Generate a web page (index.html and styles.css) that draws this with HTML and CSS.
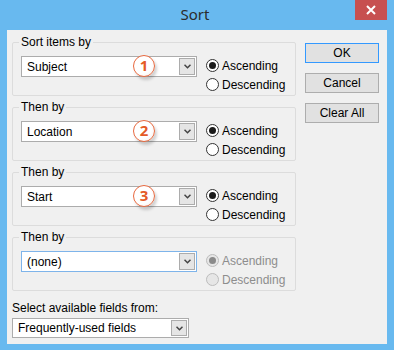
FILE: index.html
```html
<!DOCTYPE html>
<html lang="en">
<head>
    <meta charset="UTF-8">
    <title>Sort</title>
    <link rel="stylesheet" href="styles.css">
</head>
<body>
    <div class="window">
        <div class="titlebar">
            <span class="title">Sort</span>
            <button class="close-btn">
                <svg width="10" height="10" viewBox="0 0 10 10"><path d="M1 1 L9 9 M9 1 L1 9" stroke="#fff" stroke-width="2"/></svg>
            </button>
        </div>

        <div class="client">
            <div class="main">
                <fieldset class="group">
                    <legend>Sort items by</legend>
                    <div class="row">
                        <div class="combo">
                            <span class="combo-text">Subject</span>
                            <span class="drop"><svg width="7" height="5" viewBox="0 0 7 5"><path d="M0.5 0.8 L3.5 3.8 L6.5 0.8" fill="none" stroke="#444" stroke-width="1.5"/></svg></span>
                            <span class="step">1</span>
                        </div>
                        <div class="radios">
                            <label class="radio"><span class="dot checked"></span>Ascending</label>
                            <label class="radio"><span class="dot"></span>Descending</label>
                        </div>
                    </div>
                </fieldset>

                <fieldset class="group">
                    <legend>Then by</legend>
                    <div class="row">
                        <div class="combo">
                            <span class="combo-text">Location</span>
                            <span class="drop"><svg width="7" height="5" viewBox="0 0 7 5"><path d="M0.5 0.8 L3.5 3.8 L6.5 0.8" fill="none" stroke="#444" stroke-width="1.5"/></svg></span>
                            <span class="step">2</span>
                        </div>
                        <div class="radios">
                            <label class="radio"><span class="dot checked"></span>Ascending</label>
                            <label class="radio"><span class="dot"></span>Descending</label>
                        </div>
                    </div>
                </fieldset>

                <fieldset class="group">
                    <legend>Then by</legend>
                    <div class="row">
                        <div class="combo">
                            <span class="combo-text">Start</span>
                            <span class="drop"><svg width="7" height="5" viewBox="0 0 7 5"><path d="M0.5 0.8 L3.5 3.8 L6.5 0.8" fill="none" stroke="#444" stroke-width="1.5"/></svg></span>
                            <span class="step">3</span>
                        </div>
                        <div class="radios">
                            <label class="radio"><span class="dot checked"></span>Ascending</label>
                            <label class="radio"><span class="dot"></span>Descending</label>
                        </div>
                    </div>
                </fieldset>

                <fieldset class="group">
                    <legend>Then by</legend>
                    <div class="row">
                        <div class="combo focused">
                            <span class="combo-text">(none)</span>
                            <span class="drop"><svg width="7" height="5" viewBox="0 0 7 5"><path d="M0.5 0.8 L3.5 3.8 L6.5 0.8" fill="none" stroke="#444" stroke-width="1.5"/></svg></span>
                        </div>
                        <div class="radios disabled">
                            <label class="radio"><span class="dot checked"></span>Ascending</label>
                            <label class="radio"><span class="dot"></span>Descending</label>
                        </div>
                    </div>
                </fieldset>

                <div class="fields">
                    <div class="fields-label">Select available fields from:</div>
                    <div class="combo small">
                        <span class="combo-text">Frequently-used fields</span>
                        <span class="drop"><svg width="7" height="5" viewBox="0 0 7 5"><path d="M0.5 0.8 L3.5 3.8 L6.5 0.8" fill="none" stroke="#444" stroke-width="1.5"/></svg></span>
                    </div>
                </div>
            </div>

            <div class="buttons">
                <button class="btn default">OK</button>
                <button class="btn">Cancel</button>
                <button class="btn">Clear All</button>
            </div>
        </div>
    </div>
</body>
</html>
```

FILE: styles.css
```css
body {
    margin: 0;
    padding: 0;
    font-family: "Liberation Sans", Arial, sans-serif;
    font-size: 12px;
    color: #000;
}

.window {
    width: 394px;
    height: 350px;
    background-color: #68b9ef;
    display: flex;
    flex-direction: column;
}

.titlebar {
    height: 30px;
    position: relative;
    display: flex;
    justify-content: center;
    align-items: center;
}

.title {
    font-family: "Noto Sans", sans-serif;
    font-size: 15px;
    color: #2b2b2b;
    margin-left: -4px;
    margin-top: -2px;
}

.close-btn {
    position: absolute;
    top: 0;
    right: 7px;
    width: 32px;
    height: 20px;
    border: none;
    padding: 0;
    background-color: #c75050;
    display: flex;
    align-items: center;
    justify-content: center;
}

.client {
    background-color: #f0f0f0;
    margin: 0 7px 0 7px;
    height: 314px;
    display: flex;
    box-sizing: border-box;
    padding: 4px 8px 0 5px;
}

.main {
    width: 284px;
    display: flex;
    flex-direction: column;
    gap: 3px;
}

.group {
    margin: 0;
    border: 1px solid #dcdcdc;
    border-radius: 2px;
    padding: 6px 0 1px 8px;
}

.group legend {
    padding: 0 2px;
    margin-left: -2px;
    line-height: 16px;
}

.row {
    display: flex;
    align-items: flex-start;
    gap: 9px;
}

.combo {
    position: relative;
    width: 176px;
    height: 21px;
    box-sizing: border-box;
    border: 1px solid #acacac;
    background-color: #fff;
    display: flex;
    align-items: center;
    justify-content: space-between;
}

.combo.focused {
    border-color: #7eb4ea;
}

.combo-text {
    padding-left: 5px;
}

.drop {
    width: 16px;
    height: 17px;
    box-sizing: border-box;
    margin-right: 1px;
    border: 1px solid #acacac;
    background-color: #e5e5e5;
    display: flex;
    align-items: center;
    justify-content: center;
}

.step {
    position: absolute;
    left: 111px;
    top: -2px;
    width: 22px;
    height: 22px;
    box-sizing: border-box;
    border: 1.5px solid #e8693f;
    border-radius: 50%;
    background: radial-gradient(circle at 40% 40%, #fff 55%, #f3eee9 100%);
    box-shadow: 2px 3px 3px rgba(0, 0, 0, 0.18);
    color: #e45a26;
    font-family: "Noto Sans", sans-serif;
    font-weight: bold;
    font-size: 15px;
    line-height: 19px;
    text-align: center;
}

.radios {
    display: flex;
    flex-direction: column;
}

.radio {
    height: 19px;
    display: flex;
    align-items: center;
    gap: 3px;
}

.dot {
    width: 13px;
    height: 13px;
    box-sizing: border-box;
    border: 1px solid #333;
    border-radius: 50%;
    background-color: #fff;
    display: flex;
    align-items: center;
    justify-content: center;
}

.dot.checked::after {
    content: "";
    width: 7px;
    height: 7px;
    border-radius: 50%;
    background-color: #1a1a1a;
}

.radios.disabled .radio {
    color: #8d8d8d;
}

.radios.disabled .dot {
    border-color: #bcbcbc;
    background-color: #e6e6e6;
}

.radios.disabled .dot.checked::after {
    background-color: #8a8a8a;
}

.fields {
    margin-top: 7px;
    display: flex;
    flex-direction: column;
    gap: 3px;
}

.combo.small {
    width: 177px;
    height: 20px;
}

.combo.small .drop {
    height: 16px;
}

.buttons {
    margin-left: 9px;
    padding-top: 9px;
    display: flex;
    flex-direction: column;
    gap: 10px;
}

.btn {
    width: 74px;
    height: 20px;
    font-family: "Liberation Sans", Arial, sans-serif;
    font-size: 12px;
    color: #000;
    background-color: #e1e1e1;
    border: 1px solid #adadad;
    padding: 0;
}

.btn.default {
    border-color: #3399ff;
}
```
